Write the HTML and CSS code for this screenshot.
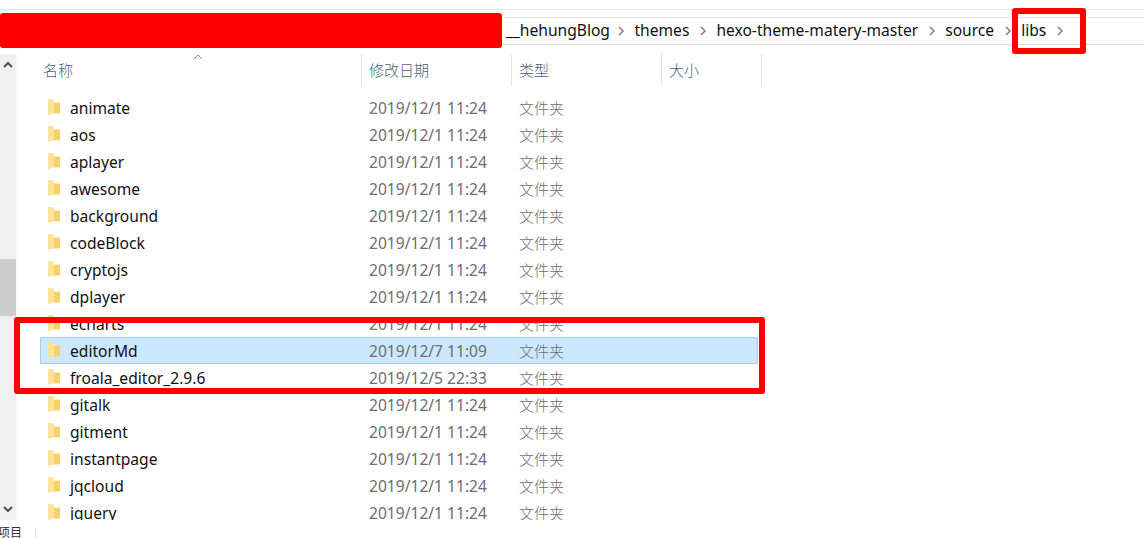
FILE: index.html
```html
<!DOCTYPE html>
<html lang="zh">
<head>
<meta charset="utf-8">
<title>libs</title>
<link rel="stylesheet" href="styles.css">
</head>
<body>
<div class="window">
  <header class="top">
    <div class="address">
      <span class="crumb crumb-root">__hehungBlog</span><svg class="chev" viewBox="0 0 8 12"><path d="M2 2l4 4-4 4"/></svg>
      <span class="crumb">themes</span><svg class="chev" viewBox="0 0 8 12"><path d="M2 2l4 4-4 4"/></svg>
      <span class="crumb">hexo-theme-matery-master</span><svg class="chev" viewBox="0 0 8 12"><path d="M2 2l4 4-4 4"/></svg>
      <span class="crumb">source</span><svg class="chev" viewBox="0 0 8 12"><path d="M2 2l4 4-4 4"/></svg>
      <span class="crumb">libs</span><svg class="chev" viewBox="0 0 8 12"><path d="M2 2l4 4-4 4"/></svg>
    </div>
  </header>
  <main class="main">
    <div class="scrollbar">
      <svg class="arrow" viewBox="0 0 10 6"><path d="M1 5l4-4 4 4"/></svg>
      <div class="track"><div class="thumb"></div></div>
      <svg class="arrow" viewBox="0 0 10 6"><path d="M1 1l4 4 4-4"/></svg>
    </div>
    <div class="content">
      <div class="head">
        <div class="hcell c-name">名称<svg class="sort" viewBox="0 0 10 6"><path d="M1 5l4-4 4 4"/></svg></div>
        <div class="hcell c-date">修改日期</div>
        <div class="hcell c-type">类型</div>
        <div class="hcell c-size">大小</div>
      </div>
      <div class="rows">
        <div class="row"><div class="c-name name"><svg class="folder" viewBox="0 0 14 18"><path class="fm" d="M6 4.500h7v11H6z"/><path class="ff" d="M1 1h5l1 2v12l-6 2z"/></svg>animate</div><div class="c-date">2019/12/1 11:24</div><div class="c-type">文件夹</div></div>
        <div class="row"><div class="c-name name"><svg class="folder" viewBox="0 0 14 18"><path class="fm" d="M6 4.500h7v11H6z"/><path class="ff" d="M1 1h5l1 2v12l-6 2z"/></svg>aos</div><div class="c-date">2019/12/1 11:24</div><div class="c-type">文件夹</div></div>
        <div class="row"><div class="c-name name"><svg class="folder" viewBox="0 0 14 18"><path class="fm" d="M6 4.500h7v11H6z"/><path class="ff" d="M1 1h5l1 2v12l-6 2z"/></svg>aplayer</div><div class="c-date">2019/12/1 11:24</div><div class="c-type">文件夹</div></div>
        <div class="row"><div class="c-name name"><svg class="folder" viewBox="0 0 14 18"><path class="fm" d="M6 4.500h7v11H6z"/><path class="ff" d="M1 1h5l1 2v12l-6 2z"/></svg>awesome</div><div class="c-date">2019/12/1 11:24</div><div class="c-type">文件夹</div></div>
        <div class="row"><div class="c-name name"><svg class="folder" viewBox="0 0 14 18"><path class="fm" d="M6 4.500h7v11H6z"/><path class="ff" d="M1 1h5l1 2v12l-6 2z"/></svg>background</div><div class="c-date">2019/12/1 11:24</div><div class="c-type">文件夹</div></div>
        <div class="row"><div class="c-name name"><svg class="folder" viewBox="0 0 14 18"><path class="fm" d="M6 4.500h7v11H6z"/><path class="ff" d="M1 1h5l1 2v12l-6 2z"/></svg>codeBlock</div><div class="c-date">2019/12/1 11:24</div><div class="c-type">文件夹</div></div>
        <div class="row"><div class="c-name name"><svg class="folder" viewBox="0 0 14 18"><path class="fm" d="M6 4.500h7v11H6z"/><path class="ff" d="M1 1h5l1 2v12l-6 2z"/></svg>cryptojs</div><div class="c-date">2019/12/1 11:24</div><div class="c-type">文件夹</div></div>
        <div class="row"><div class="c-name name"><svg class="folder" viewBox="0 0 14 18"><path class="fm" d="M6 4.500h7v11H6z"/><path class="ff" d="M1 1h5l1 2v12l-6 2z"/></svg>dplayer</div><div class="c-date">2019/12/1 11:24</div><div class="c-type">文件夹</div></div>
        <div class="row"><div class="c-name name"><svg class="folder" viewBox="0 0 14 18"><path class="fm" d="M6 4.500h7v11H6z"/><path class="ff" d="M1 1h5l1 2v12l-6 2z"/></svg>echarts</div><div class="c-date">2019/12/1 11:24</div><div class="c-type">文件夹</div></div>
        <div class="row selected"><div class="c-name name"><svg class="folder" viewBox="0 0 14 18"><path class="fm" d="M6 4.500h7v11H6z"/><path class="ff" d="M1 1h5l1 2v12l-6 2z"/></svg>editorMd</div><div class="c-date">2019/12/7 11:09</div><div class="c-type">文件夹</div></div>
        <div class="row"><div class="c-name name"><svg class="folder" viewBox="0 0 14 18"><path class="fm" d="M6 4.500h7v11H6z"/><path class="ff" d="M1 1h5l1 2v12l-6 2z"/></svg>froala_editor_2.9.6</div><div class="c-date">2019/12/5 22:33</div><div class="c-type">文件夹</div></div>
        <div class="row"><div class="c-name name"><svg class="folder" viewBox="0 0 14 18"><path class="fm" d="M6 4.500h7v11H6z"/><path class="ff" d="M1 1h5l1 2v12l-6 2z"/></svg>gitalk</div><div class="c-date">2019/12/1 11:24</div><div class="c-type">文件夹</div></div>
        <div class="row"><div class="c-name name"><svg class="folder" viewBox="0 0 14 18"><path class="fm" d="M6 4.500h7v11H6z"/><path class="ff" d="M1 1h5l1 2v12l-6 2z"/></svg>gitment</div><div class="c-date">2019/12/1 11:24</div><div class="c-type">文件夹</div></div>
        <div class="row"><div class="c-name name"><svg class="folder" viewBox="0 0 14 18"><path class="fm" d="M6 4.500h7v11H6z"/><path class="ff" d="M1 1h5l1 2v12l-6 2z"/></svg>instantpage</div><div class="c-date">2019/12/1 11:24</div><div class="c-type">文件夹</div></div>
        <div class="row"><div class="c-name name"><svg class="folder" viewBox="0 0 14 18"><path class="fm" d="M6 4.500h7v11H6z"/><path class="ff" d="M1 1h5l1 2v12l-6 2z"/></svg>jqcloud</div><div class="c-date">2019/12/1 11:24</div><div class="c-type">文件夹</div></div>
        <div class="row"><div class="c-name name"><svg class="folder" viewBox="0 0 14 18"><path class="fm" d="M6 4.500h7v11H6z"/><path class="ff" d="M1 1h5l1 2v12l-6 2z"/></svg>jquery</div><div class="c-date">2019/12/1 11:24</div><div class="c-type">文件夹</div></div>
      </div>
    </div>
  </main>
  <footer class="status"><span class="count">项目</span></footer>
  <div class="redact"></div>
  <div class="mark mark-libs"></div>
  <div class="mark mark-rows"></div>
</div>
</body>
</html>
```

FILE: styles.css
```css
* { box-sizing: border-box; }
html, body { margin: 0; padding: 0; background: #fff; }
.window {
  position: relative;
  width: 1144px;
  height: 538px;
  overflow: hidden;
  font-family: "Noto Sans", "Noto Sans CJK SC", sans-serif;
  font-size: 15.6px;
  color: #111;
}
.top {
  height: 54px;
  padding-top: 9px;
}
.top::before {
  content: "";
  display: block;
  height: 1px;
  background: #e6e6e6;
  margin-bottom: 7px;
}
.address {
  height: 28px;
  display: flex;
  align-items: center;
  padding-left: 506px;
  padding-bottom: 2px;
  border-top: 1px solid #dcdcdc;
  border-bottom: 1px solid #dcdcdc;
}
.crumb { white-space: nowrap; }
.crumb-root { margin-right: -2.5px; }
.chev { width: 8px; height: 12px; margin: 2px 9.5px 0; flex: none; }
.chev path { fill: none; stroke: #808080; stroke-width: 1.5; }
.main { display: flex; height: 466px; }
.scrollbar {
  width: 17px;
  flex: none;
  background: #f0f0f0;
  border-right: 1px solid #f7f7f7;
  display: flex;
  flex-direction: column;
  align-items: center;
}
.arrow { width: 10px; height: 6px; margin: 8px 0; flex: none; }
.arrow path { fill: none; stroke: #505050; stroke-width: 2; }
.track { flex: 1; width: 100%; padding-top: 183px; }
.thumb { height: 57px; background: #cdcdcd; }
.content { flex: 1; min-width: 0; }
.head { display: flex; height: 32px; padding-left: 21px; }
.hcell {
  position: relative;
  padding-left: 7px;
  padding-top: 3px;
  color: #4c607a;
  font-family: "Noto Sans CJK SC", sans-serif;
  font-weight: 300;
  font-size: 15px;
  line-height: 26px;
  border-right: 1px solid #e5e5e5;
}
.hcell.c-name { padding-left: 5px; }
.c-name { width: 324px; flex: none; }
.c-date { width: 150px; flex: none; }
.c-type { width: 150px; flex: none; }
.c-size { width: 100px; flex: none; }
.sort {
  position: absolute;
  left: 155px;
  top: 0;
  width: 10px;
  height: 6px;
}
.sort path { fill: none; stroke: #8a8a8a; stroke-width: 1; }
.rows { height: 434px; overflow: hidden; padding-top: 8px; padding-left: 23px; }
.row {
  display: flex;
  align-items: center;
  height: 27px;
  width: 718px;
  color: #6d6d6d;
  line-height: 25px;
  border: 1px solid transparent;
}
.row .c-name { width: 321px; }
.row .c-date { padding-left: 7px; padding-top: 1px; }
.row .c-type {
  padding-left: 7px;
  font-family: "Noto Sans CJK SC", sans-serif;
  font-weight: 300;
  font-size: 15px;
}
.name {
  display: flex;
  align-items: center;
  color: #111;
  padding-left: 6px;
  padding-top: 1px;
}
.folder { width: 14px; height: 18px; margin: -2px 9px 0 0; flex: none; }
.fm { fill: #f5d26c; }
.ff { fill: #fbe39c; }
.selected { background: #cce8ff; border-color: #a6d0ef; }
.status { height: 18px; position: relative; }
.status::after {
  content: "";
  position: absolute;
  left: 35px;
  top: 8px;
  width: 1px;
  height: 10px;
  background: #e5e5e5;
}
.count {
  position: absolute;
  left: -2px;
  top: 3px;
  font-family: "Noto Sans CJK SC", sans-serif;
  font-size: 12px;
  line-height: 18px;
  color: #333;
}
.redact {
  position: absolute;
  left: 0;
  top: 13px;
  width: 502px;
  height: 35px;
  background: #f00;
  border-radius: 3px;
}
.mark {
  position: absolute;
  border: 6px solid #f00;
  border-radius: 3px;
}
.mark-libs { left: 1012px; top: 8px; width: 74px; height: 46px; }
.mark-rows { left: 14px; top: 317px; width: 751px; height: 77px; }
```
